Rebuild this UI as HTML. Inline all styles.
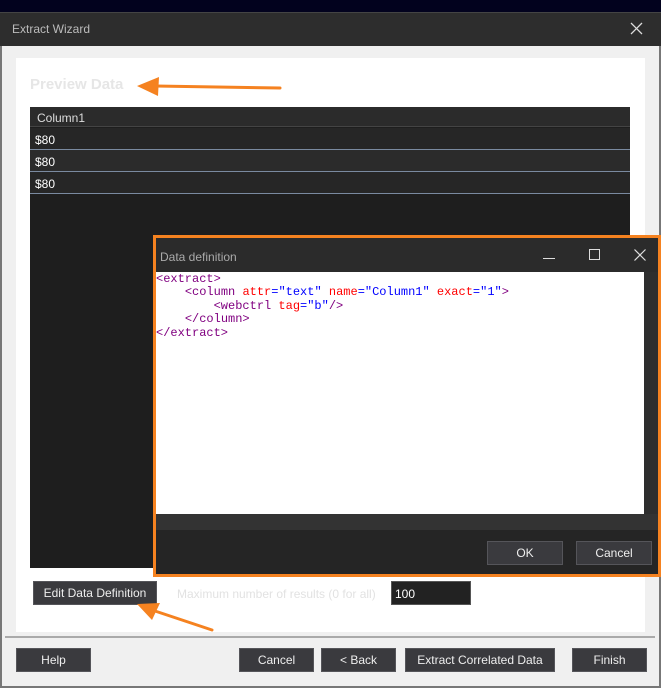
<!DOCTYPE html>
<html><head><style>
*{margin:0;padding:0;box-sizing:border-box}
body{width:661px;height:688px;position:relative;overflow:hidden;background:#f0f0f0;font-family:"Liberation Sans",sans-serif;font-size:12px}
.a{position:absolute}
.btn{position:absolute;background:#3a3a3e;border:1px solid #55555a;color:#eee;font-size:12px;text-align:center;line-height:23px}
.mono{font-family:"Liberation Mono",monospace;font-size:12px;line-height:13.4px;white-space:pre}
.t{color:#800080}.at{color:#f00}.v{color:#00f}
</style></head><body>
<div class="a" style="left:0;top:0;width:661px;height:12px;background:#02021e"></div>
<div class="a" style="left:0;top:12px;width:661px;height:34px;background:#2d2d2d;border-top:1px solid #444"></div>
<div class="a" style="left:12px;top:22px;color:#bbb;font-size:12px">Extract Wizard</div>
<svg class="a" style="left:630px;top:22px" width="13" height="13"><path d="M1 1L12 12M12 1L1 12" stroke="#ddd" stroke-width="1.3"/></svg>
<div class="a" style="left:0;top:46px;width:2px;height:642px;background:#777"></div>
<div class="a" style="left:659px;top:46px;width:2px;height:642px;background:#777"></div>
<div class="a" style="left:0;top:686px;width:661px;height:2px;background:#777"></div>
<div class="a" style="left:16px;top:58px;width:629px;height:574px;background:#fff"></div>
<div class="a" style="left:30px;top:76px;color:#e6e6e6;font-weight:bold;font-size:15px">Preview Data</div>
<div class="a" style="left:30px;top:107px;width:600px;height:461px;background:#1e1e1e"></div>
<div class="a" style="left:30px;top:107px;width:600px;height:20px;background:#2b2b2b;border-bottom:1px solid #444;color:#ddd;padding:4px 0 0 7px">Column1</div>
<div class="a" style="left:30px;top:128px;width:600px;height:22px;background:#262626;border-bottom:1px solid #7a8aa0;color:#fff;padding:5px 0 0 5px">$80</div>
<div class="a" style="left:30px;top:150px;width:600px;height:22px;background:#2b2b2b;border-bottom:1px solid #7a8aa0;color:#fff;padding:5px 0 0 5px">$80</div>
<div class="a" style="left:30px;top:172px;width:600px;height:22px;background:#262626;border-bottom:1px solid #7a8aa0;color:#fff;padding:5px 0 0 5px">$80</div>
<div class="btn" style="left:33px;top:581px;width:124px;height:24px">Edit Data Definition</div>
<div class="a" style="left:177px;top:587px;color:#e2e2e2">Maximum number of results (0 for all)</div>
<div class="a" style="left:391px;top:581px;width:80px;height:24px;background:#222;border:1px solid #555;color:#fff;padding:5px 0 0 3px">100</div>
<div class="a" style="left:5px;top:636px;width:650px;height:2px;background:#aaa"></div>
<div class="btn" style="left:16px;top:648px;width:75px;height:24px">Help</div>
<div class="btn" style="left:239px;top:648px;width:75px;height:24px">Cancel</div>
<div class="btn" style="left:321px;top:648px;width:75px;height:24px">&lt; Back</div>
<div class="btn" style="left:405px;top:648px;width:150px;height:24px">Extract Correlated Data</div>
<div class="btn" style="left:572px;top:648px;width:75px;height:24px">Finish</div>
<div class="a" style="left:153px;top:235px;width:508px;height:342px;border:3px solid #f58220;background:#252525">
 <div class="a" style="left:0;top:0;width:502px;height:34px;background:#2b2b2b"></div>
 <div class="a" style="left:4px;top:12px;color:#aaa">Data definition</div>
 <div class="a" style="left:387px;top:20px;width:12px;height:1px;background:#ddd"></div>
 <div class="a" style="left:433px;top:11px;width:11px;height:11px;border:1px solid #ddd"></div>
 <svg class="a" style="left:478px;top:11px" width="12" height="12"><path d="M0.5 0.5L11.5 11.5M11.5 0.5L0.5 11.5" stroke="#ddd" stroke-width="1.2"/></svg>
 <div class="a" style="left:0;top:34px;width:488px;height:242px;background:#fff"></div>
 <div class="a" style="left:488px;top:34px;width:14px;height:242px;background:#2e2e2e"></div>
 <div class="a" style="left:0;top:276px;width:502px;height:16px;background:#333"></div>
 <div class="a mono" style="left:0;top:35px"><span class="t">&lt;extract&gt;</span>
    <span class="t">&lt;column</span> <span class="at">attr</span><span class="v">="text"</span> <span class="at">name</span><span class="v">="Column1"</span> <span class="at">exact</span><span class="v">="1"</span><span class="t">&gt;</span>
        <span class="t">&lt;webctrl</span> <span class="at">tag</span><span class="v">="b"</span><span class="t">/&gt;</span>
    <span class="t">&lt;/column&gt;</span>
<span class="t">&lt;/extract&gt;</span></div>
 <div class="btn" style="left:331px;top:303px;width:76px;height:24px">OK</div>
 <div class="btn" style="left:420px;top:303px;width:76px;height:24px">Cancel</div>
</div>
<svg class="a" style="left:0;top:0" width="661" height="688">
<path d="M155 86L280 88" stroke="#f58220" stroke-width="3" stroke-linecap="round"/>
<path d="M137 86L159 77L158 96Z" fill="#f58220"/>
<path d="M152 610L212 630" stroke="#f58220" stroke-width="3" stroke-linecap="round"/>
<path d="M137 604L160 603L152 620Z" fill="#f58220"/>
</svg>
</body></html>
